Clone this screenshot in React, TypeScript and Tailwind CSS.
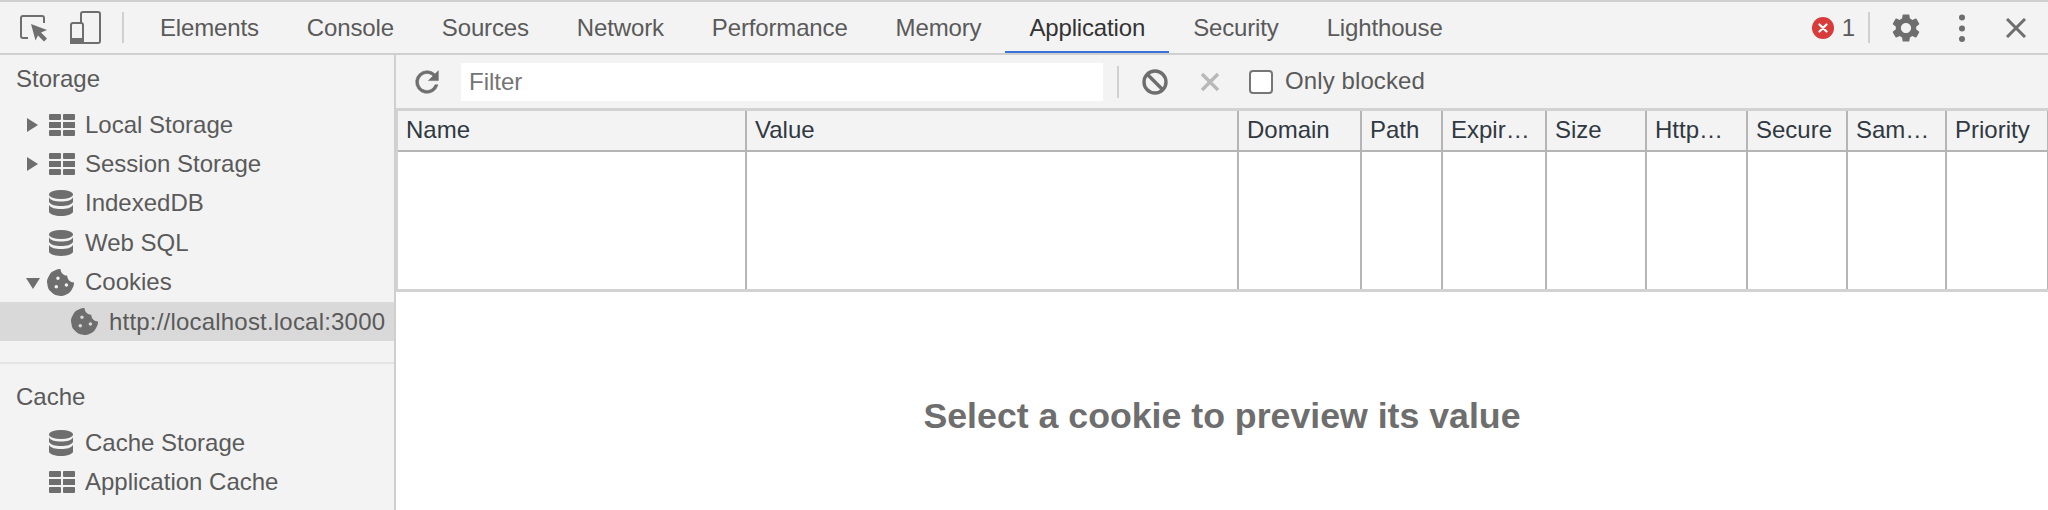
import React from "react";
import { FaCookieBite } from "react-icons/fa";
import { MdSettings } from "react-icons/md";

const tabs = ["Elements", "Console", "Sources", "Network", "Performance", "Memory", "Application", "Security", "Lighthouse"];
const columns: [string, number][] = [
  ["Name", 349],
  ["Value", 492],
  ["Domain", 123],
  ["Path", 81],
  ["Expir…", 104],
  ["Size", 100],
  ["Http…", 101],
  ["Secure", 100],
  ["Sam…", 99],
  ["Priority", 102],
];

const Grid = () => (
  <svg width="26" height="22" viewBox="0 0 26 22" className="ml-[1px] shrink-0 text-[#6e6e6e]" fill="currentColor">
    <rect x="0" y="0" width="12" height="6" rx="1" />
    <rect x="14" y="0" width="12" height="6" rx="1" />
    <rect x="0" y="8" width="12" height="6" />
    <rect x="14" y="8" width="12" height="6" />
    <rect x="0" y="16" width="12" height="6" rx="1" />
    <rect x="14" y="16" width="12" height="6" rx="1" />
  </svg>
);

const Db = () => (
  <svg width="24" height="26" viewBox="0 0 24 26" className="ml-[1px] shrink-0 text-[#6e6e6e]" fill="currentColor">
    <ellipse cx="12" cy="4.5" rx="12" ry="4.5" />
    <path d="M0 7.5C2 10.5 6 11.5 12 11.5S22 10.5 24 7.5V12C22 15 18 16 12 16S2 15 0 12Z" />
    <path d="M0 15C2 18 6 19 12 19S22 18 24 15V21.5C24 24 18 26 12 26S0 24 0 21.5Z" />
  </svg>
);

const Row = ({ icon, label, caret, indent = 48, selected, wide }: { icon: React.ReactNode; label: string; caret?: "right" | "down"; indent?: number; selected?: boolean; wide?: boolean }) => (
  <div className={`relative flex h-[39.4px] items-center ${selected ? "bg-[#d9d9d9]" : ""}`} style={{ paddingLeft: indent }}>
    {caret === "right" && (
      <span className="absolute left-[27px] top-[13px] h-0 w-0 border-y-[7px] border-l-[11px] border-y-transparent border-l-[#6e6e6e]" />
    )}
    {caret === "down" && (
      <span className="absolute left-[26px] top-[15px] h-0 w-0 border-x-[7px] border-t-[11px] border-x-transparent border-t-[#6e6e6e]" />
    )}
    <span className="flex w-[37px] shrink-0 items-center">{icon}</span>
    <span className={`whitespace-nowrap ${wide ? "tracking-[0.2px]" : ""}`}>{label}</span>
  </div>
);

const Cookie = () => <FaCookieBite className="shrink-0 text-[#6e6e6e] text-[27px] -ml-[1px]" />;

export default function App() {
  return (
    <div className="flex h-[510px] w-[2048px] flex-col overflow-hidden bg-white text-[24px] leading-none text-[#5a5a5a] [font-family:'Liberation_Sans',Arial,sans-serif]">
      {/* Top toolbar */}
      <div className="flex h-[55px] shrink-0 items-center border-y-2 border-t-[#cfcfcf] border-b-[#cfcfcf] bg-[#f3f3f3]">
        <svg width="28" height="28" viewBox="0 0 28 28" className="ml-[20px] text-[#6e6e6e]" fill="none" stroke="currentColor" strokeWidth="2">
          <path d="M8 24H3a2 2 0 0 1-2-2V4a2 2 0 0 1 2-2h19a2 2 0 0 1 2 2v5" />
          <path d="M11 10l16 6-6 2.5 6 6-3 3-6-6-2.5 5Z" fill="currentColor" stroke="none" />
        </svg>
        <svg width="31" height="33" viewBox="0 0 31 33" className="ml-[22px] text-[#6e6e6e]" fill="none" stroke="currentColor" strokeWidth="2">
          <path d="M11 12V3a2 2 0 0 1 2-2h15a2 2 0 0 1 2 2v27a2 2 0 0 1-2 2H11" />
          <rect x="1" y="12" width="12" height="20" rx="2" />
          <rect x="1" y="28" width="12" height="4" fill="currentColor" />
        </svg>
        <div className="ml-[21px] h-[31px] w-[2px] bg-[#d0d0d0]" />
        <div className="ml-[12px] flex h-full">
          {tabs.map((t) => (
            <div
              key={t}
              className={`flex h-full items-center px-[24px] ${t === "Application" ? "border-b-2 border-[#3b74d8] pt-[2px] text-[#333333]" : ""}`}
            >
              <span className="tracking-[-0.15px]">{t}</span>
            </div>
          ))}
        </div>
        <div className="flex-1" />
        <span className="flex h-[22px] w-[22px] items-center justify-center rounded-full bg-[#d93a3a]">
          <svg width="10" height="10" viewBox="0 0 10 10" stroke="white" strokeWidth="2.2" strokeLinecap="round">
            <path d="M1.5 1.5l7 7M8.5 1.5l-7 7" />
          </svg>
        </span>
        <span className="ml-[8px] text-[#5a5a5a]">1</span>
        <div className="ml-[13px] h-[31px] w-[2px] bg-[#d0d0d0]" />
        <MdSettings className="ml-[19px] text-[34px] text-[#6e6e6e]" />
        <svg width="8" height="28" viewBox="0 0 8 28" className="ml-[35px] text-[#6e6e6e]" fill="currentColor">
          <circle cx="4" cy="3.5" r="3" />
          <circle cx="4" cy="14.5" r="3" />
          <circle cx="4" cy="25" r="3" />
        </svg>
        <svg width="20" height="20" viewBox="0 0 20 20" className="ml-[40px] mr-[22px] text-[#6e6e6e]" stroke="currentColor" strokeWidth="3">
          <path d="M1 1l18 18M19 1L1 19" />
        </svg>
      </div>

      <div className="flex min-h-0 flex-1">
        {/* Sidebar */}
        <aside className="flex w-[396px] shrink-0 flex-col border-r-2 border-[#cfcfcf] bg-[#f3f3f3]">
          <div className="flex h-[49px] shrink-0 items-center pb-[2px] pl-[16px]">Storage</div>
          <div className="h-[1px] shrink-0" />
          <Row icon={<Grid />} label="Local Storage" caret="right" />
          <Row icon={<Grid />} label="Session Storage" caret="right" />
          <Row icon={<Db />} label="IndexedDB" />
          <Row icon={<Db />} label="Web SQL" />
          <Row icon={<Cookie />} label="Cookies" caret="down" />
          <Row icon={<Cookie />} label="http://localhost.local:3000" indent={72} selected wide />
          <div className="mt-[21px] shrink-0 border-t-2 border-[#e4e4e4]" />
          <div className="flex h-[59px] shrink-0 items-center pl-[16px] pt-[6px]">Cache</div>
          <Row icon={<Db />} label="Cache Storage" />
          <Row icon={<Grid />} label="Application Cache" />
        </aside>

        {/* Main */}
        <main className="flex min-w-0 flex-1 flex-col">
          <div className="flex h-[53px] shrink-0 items-center bg-[#f3f3f3] pt-[1px]">
            <svg width="34" height="34" viewBox="0 0 24 24" className="ml-[14px] text-[#6e6e6e]" fill="currentColor">
              <path d="M17.65 6.35A7.96 7.96 0 0 0 12 4a8 8 0 1 0 7.73 10h-2.08A6 6 0 1 1 12 6c1.66 0 3.14.69 4.22 1.78L13 11h7V4z" stroke="currentColor" strokeWidth="0.4" />
            </svg>
            <div className="ml-[17px] flex h-[38px] w-[642px] items-center bg-white pl-[8px] text-[#757575]">Filter</div>
            <div className="ml-[14px] h-[32px] w-[2px] bg-[#d0d0d0]" />
            <svg width="26" height="26" viewBox="0 0 26 26" className="ml-[23px] text-[#6e6e6e]" fill="none" stroke="currentColor" strokeWidth="3.4">
              <circle cx="13" cy="13" r="11" />
              <path d="M5 5l16 16" />
            </svg>
            <svg width="20" height="20" viewBox="0 0 20 20" className="ml-[32px] text-[#b8b8b8]" stroke="currentColor" strokeWidth="3.4">
              <path d="M2 2l16 16M18 2L2 18" />
            </svg>
            <span className="ml-[29px] h-[24px] w-[24px] rounded-[4px] border-2 border-[#767676] bg-white" />
            <span className="ml-[12px] -translate-y-[1px] tracking-[0.1px]">Only blocked</span>
          </div>

          {/* Cookie table */}
          <div className="flex h-[184px] shrink-0 border-y-[3px] border-l-2 border-[#d2d2d2] bg-white">
            {columns.map(([name, w]) => (
              <div
                key={name}
                className="flex shrink-0 flex-col border-r-2 border-[#b5b5b5]"
                style={{ width: w }}
              >
                <div className="flex h-[41px] shrink-0 items-center border-b-2 border-[#b5b5b5] bg-[#f3f3f3] pb-[2px] pl-[8px] text-[#303942]">
                  {name}
                </div>
              </div>
            ))}
          </div>

          {/* Preview */}
          <div className="flex flex-1 items-center justify-center pt-[32px] text-[35.7px] font-bold text-[#6e6e6e]">
            Select a cookie to preview its value
          </div>
        </main>
      </div>
    </div>
  );
}
